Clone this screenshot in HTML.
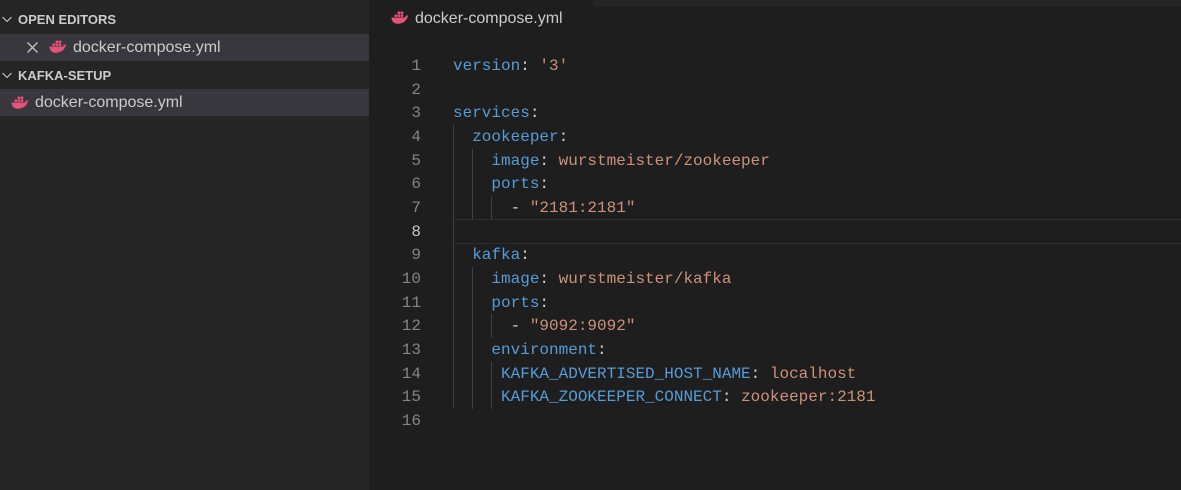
<!DOCTYPE html>
<html><head><style>
body{margin:0;width:1181px;height:490px;overflow:hidden;background:#1e1e1e;font-family:"Liberation Sans",sans-serif;position:relative}
.sb{position:absolute;left:0;top:0;width:369px;height:490px;background:#252526}
.hd{position:absolute;left:0;width:369px;height:24px;color:#cccccc;font-weight:bold;font-size:13px;line-height:24px}
.hd span{position:absolute;left:18px}
.chev{position:absolute;left:2px;top:8px}
.row{position:absolute;left:0;width:369px;height:27px;background:#37373d;color:#cccccc;font-size:16px;line-height:27px}
.whale{position:absolute;width:18px;height:13px}
.tabbar{position:absolute;left:593px;top:0;width:588px;height:7px;background:#252526}
.tab{position:absolute;left:369px;top:0;width:236px;height:38px;color:#cccccc;font-size:16px;line-height:38px}
.code{position:absolute;left:0;top:0;font-family:"Liberation Mono",monospace;font-size:16px}
.ln{position:absolute;width:421px;text-align:right;color:#858585;height:24px;line-height:24px}
.l{position:absolute;left:453px;white-space:pre;line-height:24px;color:#d4d4d4}
.k{color:#569cd6}.s{color:#ce9178}
.g{position:absolute;width:1px;background:#404040}
</style></head><body>
<svg width="0" height="0" style="position:absolute"><defs><symbol id="w" viewBox="0 0 18 13"><path d="M0.5 6.5h13.5c0.6-1.6 1.8-2.4 3.5-2.2-0.6 0.8-0.9 1.6-1.2 2.4C15 10.5 11 12.8 6.5 12.8 2.8 12.8 0.5 10 0.5 6.5z" fill="#e5537a"/><rect x="3.5" y="3.5" width="2.6" height="2.4" fill="#e5537a"/><rect x="6.6" y="3.5" width="2.6" height="2.4" fill="#e5537a"/><rect x="9.7" y="3.5" width="2.6" height="2.4" fill="#e5537a"/><rect x="6.6" y="0.6" width="2.6" height="2.4" fill="#e5537a"/><rect x="9.7" y="0.6" width="2.6" height="2.4" fill="#e5537a"/></symbol></defs></svg>
<div class="sb">
<div class="hd" style="top:8px"><svg class="chev" width="10" height="7"><path d="M0.5 1L5 5.5 9.5 1" stroke="#ccc" stroke-width="1.1" fill="none"/></svg><span>OPEN EDITORS</span></div>
<div class="row" style="top:34px"><svg style="position:absolute;left:27px;top:8px" width="11" height="11"><path d="M0.5 0.5L10.5 10.5M10.5 0.5L0.5 10.5" stroke="#c5c5c5" stroke-width="1.3"/></svg>
<svg class="whale" style="left:49px;top:6px"><use href="#w"/></svg>
<span style="position:absolute;left:73px">docker-compose.yml</span></div>
<div class="hd" style="top:64px"><svg class="chev" width="10" height="7"><path d="M0.5 1L5 5.5 9.5 1" stroke="#ccc" stroke-width="1.1" fill="none"/></svg><span>KAFKA-SETUP</span></div>
<div class="row" style="top:89px">
<svg class="whale" style="left:11px;top:7px"><use href="#w"/></svg>
<span style="position:absolute;left:35px">docker-compose.yml</span></div>
</div>
<div class="tabbar"></div>
<div class="tab"><svg class="whale" style="left:22px;top:11px"><use href="#w"/></svg><span style="position:absolute;left:46px">docker-compose.yml</span></div>
<div style="position:absolute;left:453px;top:219px;width:728px;height:23px;border-top:1px solid #2c2c2c;border-bottom:1px solid #2c2c2c"></div>
<div class="g" style="left:453px;top:125px;height:284px"></div>
<div class="g" style="left:472px;top:149px;height:70px"></div>
<div class="g" style="left:472px;top:267px;height:142px"></div>
<div class="g" style="left:491px;top:196px;height:23px"></div>
<div class="g" style="left:491px;top:314px;height:24px"></div>
<div class="g" style="left:491px;top:362px;height:47px"></div>
<div class="code">
<div class="ln" style="top:54px">1</div><div class="l" style="top:54px"><span class="k">version</span>: <span class="s">'3'</span></div>
<div class="ln" style="top:78px">2</div>
<div class="ln" style="top:101px">3</div><div class="l" style="top:101px"><span class="k">services</span>:</div>
<div class="ln" style="top:125px">4</div><div class="l" style="top:125px">  <span class="k">zookeeper</span>:</div>
<div class="ln" style="top:149px">5</div><div class="l" style="top:149px">    <span class="k">image</span>: <span class="s">wurstmeister/zookeeper</span></div>
<div class="ln" style="top:172px">6</div><div class="l" style="top:172px">    <span class="k">ports</span>:</div>
<div class="ln" style="top:196px">7</div><div class="l" style="top:196px">      - <span class="s">"2181:2181"</span></div>
<div class="ln" style="top:220px;color:#c6c6c6">8</div>
<div class="ln" style="top:243px">9</div><div class="l" style="top:243px">  <span class="k">kafka</span>:</div>
<div class="ln" style="top:267px">10</div><div class="l" style="top:267px">    <span class="k">image</span>: <span class="s">wurstmeister/kafka</span></div>
<div class="ln" style="top:291px">11</div><div class="l" style="top:291px">    <span class="k">ports</span>:</div>
<div class="ln" style="top:314px">12</div><div class="l" style="top:314px">      - <span class="s">"9092:9092"</span></div>
<div class="ln" style="top:338px">13</div><div class="l" style="top:338px">    <span class="k">environment</span>:</div>
<div class="ln" style="top:362px">14</div><div class="l" style="top:362px">     <span class="k">KAFKA_ADVERTISED_HOST_NAME</span>: <span class="s">localhost</span></div>
<div class="ln" style="top:385px">15</div><div class="l" style="top:385px">     <span class="k">KAFKA_ZOOKEEPER_CONNECT</span>: <span class="s">zookeeper:2181</span></div>
<div class="ln" style="top:409px">16</div>
</div>
</body></html>
